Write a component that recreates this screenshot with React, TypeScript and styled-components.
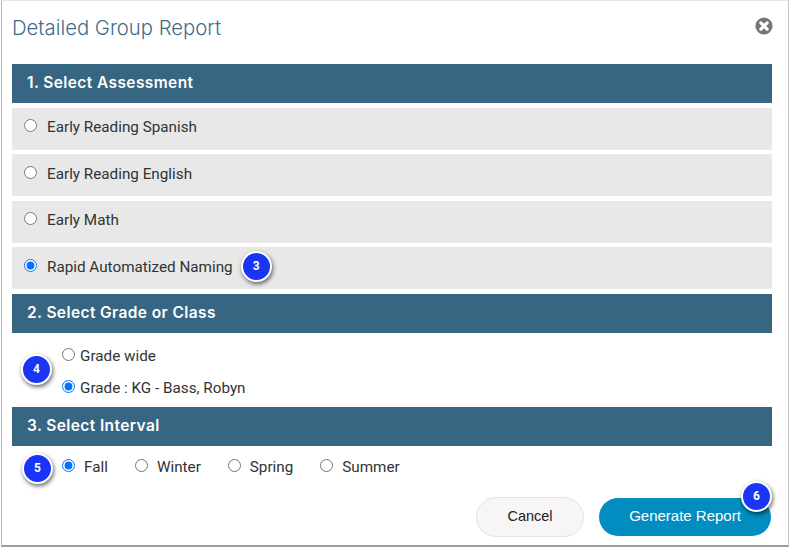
import React from 'react';
import styled, { createGlobalStyle } from 'styled-components';

const assessments = ['Early Reading Spanish', 'Early Reading English', 'Early Math', 'Rapid Automatized Naming'];
const intervals = ['Fall', 'Winter', 'Spring', 'Summer'];

const App: React.FC = () => {
  return (
    <>
      <GlobalStyle />
      <Modal>
        <TitleBar>
          <Title>Detailed Group Report</Title>
          <CloseButton aria-label="Close">
            <svg width="18" height="18" viewBox="0 0 18 18">
              <circle cx="9" cy="9" r="8.6" fill="#77767a" />
              <path d="M5.9 5.9l6.2 6.2M12.1 5.9l-6.2 6.2" stroke="#fff" strokeWidth="3.2" strokeLinecap="round" />
            </svg>
          </CloseButton>
        </TitleBar>

        <SectionHeader>1. Select Assessment</SectionHeader>
        <AssessmentList>
          {assessments.map((name, i) => (
            <AssessmentRow key={name}>
              <Radio type="radio" name="assessment" defaultChecked={i === 3} />
              <OptionLabel>{name}</OptionLabel>
              {i === 3 && <InlineBadge>3</InlineBadge>}
            </AssessmentRow>
          ))}
        </AssessmentList>

        <SectionHeader>2. Select Grade or Class</SectionHeader>
        <GradeBlock>
          <Badge $left={9} $top={21}>4</Badge>
          <GradeRow>
            <Radio type="radio" name="grade" />
            <GradeLabel>Grade wide</GradeLabel>
          </GradeRow>
          <GradeRow>
            <Radio type="radio" name="grade" defaultChecked />
            <GradeLabel>Grade : KG - Bass, Robyn</GradeLabel>
          </GradeRow>
        </GradeBlock>

        <SectionHeader>3. Select Interval</SectionHeader>
        <IntervalRow>
          <Badge $left={10} $top={7}>5</Badge>
          {intervals.map((name, i) => (
            <IntervalItem key={name}>
              <Radio type="radio" name="interval" defaultChecked={i === 0} />
              <IntervalLabel>{name}</IntervalLabel>
            </IntervalItem>
          ))}
        </IntervalRow>

        <Footer>
          <CancelButton>Cancel</CancelButton>
          <GenerateButton>
            Generate Report
            <Badge $left={142} $top={-17}>6</Badge>
          </GenerateButton>
        </Footer>
      </Modal>
    </>
  );
};

const GlobalStyle = createGlobalStyle`
  html, body {
    margin: 0;
    padding: 0;
    background: #fff;
  }
`;

const Modal = styled.div`
  box-sizing: border-box;
  width: 788px;
  height: 547px;
  margin-left: 1px;
  padding: 0 16px 0 10px;
  background: #fff;
  border-left: 1px solid #b9b9b9;
  border-right: 1px solid #c4c4c4;
  border-bottom: 2px solid #9c9c9c;
  border-top: 1px solid #e6e6e6;
  font-family: Roboto, sans-serif;
`;

const TitleBar = styled.div`
  height: 63px;
  display: flex;
  justify-content: space-between;
  align-items: flex-start;
`;

const Title = styled.h1`
  margin: 14px 0 0;
  font-family: Inter, sans-serif;
  font-size: 20.3px;
  line-height: 26px;
  font-weight: 300;
  color: #3f6c8c;
`;

const CloseButton = styled.div`
  margin-top: 16px;
  margin-right: -1px;
  height: 18px;
`;

const SectionHeader = styled.div`
  box-sizing: border-box;
  height: 39px;
  padding-left: 15px;
  background: #366682;
  color: #fff;
  font-family: Inter, sans-serif;
  font-size: 15.5px;
  font-weight: 600;
  letter-spacing: 0.4px;
  line-height: 37px;
`;

const AssessmentList = styled.div`
  display: grid;
  grid-auto-rows: 41.7px;
  row-gap: 4.8px;
  padding: 5px 0;
`;

const AssessmentRow = styled.div`
  display: flex;
  align-items: center;
  padding: 0 12px 3px;
  background: #e8e8e8;
`;

const Radio = styled.input`
  flex: none;
  width: 13px;
  height: 13px;
  margin: 0 0 3px;
`;

const OptionLabel = styled.span`
  margin-left: 10px;
  font-size: 15.25px;
  color: #333;
`;

const GradeBlock = styled.div`
  position: relative;
  height: 74px;
  padding: 7px 0 0 50px;
  box-sizing: border-box;
`;

const GradeRow = styled.div`
  display: flex;
  align-items: center;
  height: 32px;
`;

const GradeLabel = styled.span`
  margin-left: 5px;
  font-size: 15.25px;
  color: #333;
`;

const IntervalRow = styled.div`
  position: relative;
  display: flex;
  align-items: center;
  gap: 27px;
  height: 41px;
  padding-left: 50px;
`;

const IntervalItem = styled.div`
  display: flex;
  align-items: center;
`;

const IntervalLabel = styled.span`
  margin-left: 9px;
  font-size: 15.25px;
  color: #333;
`;

const Footer = styled.div`
  display: flex;
  justify-content: flex-end;
  align-items: center;
  gap: 15px;
  margin-top: 10px;
  padding-right: 1px;
`;

const CancelButton = styled.div`
  box-sizing: border-box;
  width: 108px;
  height: 40px;
  border: 1px solid #e3e3e3;
  border-radius: 20px;
  background: #f7f5f6;
  color: #222;
  font-family: 'Liberation Sans', sans-serif;
  font-size: 14.5px;
  line-height: 36px;
  text-align: center;
`;

const GenerateButton = styled.div`
  position: relative;
  width: 172px;
  height: 38px;
  border-radius: 19px;
  background: #018dbf;
  color: #fff;
  font-family: 'Liberation Sans', sans-serif;
  font-size: 15px;
  line-height: 36px;
  text-align: center;
`;

const Badge = styled.span<{ $left: number; $top: number }>`
  position: absolute;
  left: ${props => props.$left}px;
  top: ${props => props.$top}px;
  box-sizing: border-box;
  width: 31px;
  height: 31px;
  border: 2px solid #fff;
  border-radius: 50%;
  background: #1a35f5;
  color: #fff;
  font-family: Roboto, sans-serif;
  font-size: 12px;
  font-weight: 700;
  line-height: 27px;
  text-align: center;
  box-shadow: 1px 2px 4px rgba(0, 0, 0, 0.6);
`;

const InlineBadge = styled.span`
  box-sizing: border-box;
  width: 31px;
  height: 31px;
  margin-left: 8px;
  border: 2px solid #fff;
  border-radius: 50%;
  background: #1a35f5;
  color: #fff;
  font-size: 12px;
  font-weight: 700;
  line-height: 27px;
  text-align: center;
  box-shadow: 1px 2px 4px rgba(0, 0, 0, 0.6);
`;

export default App;
